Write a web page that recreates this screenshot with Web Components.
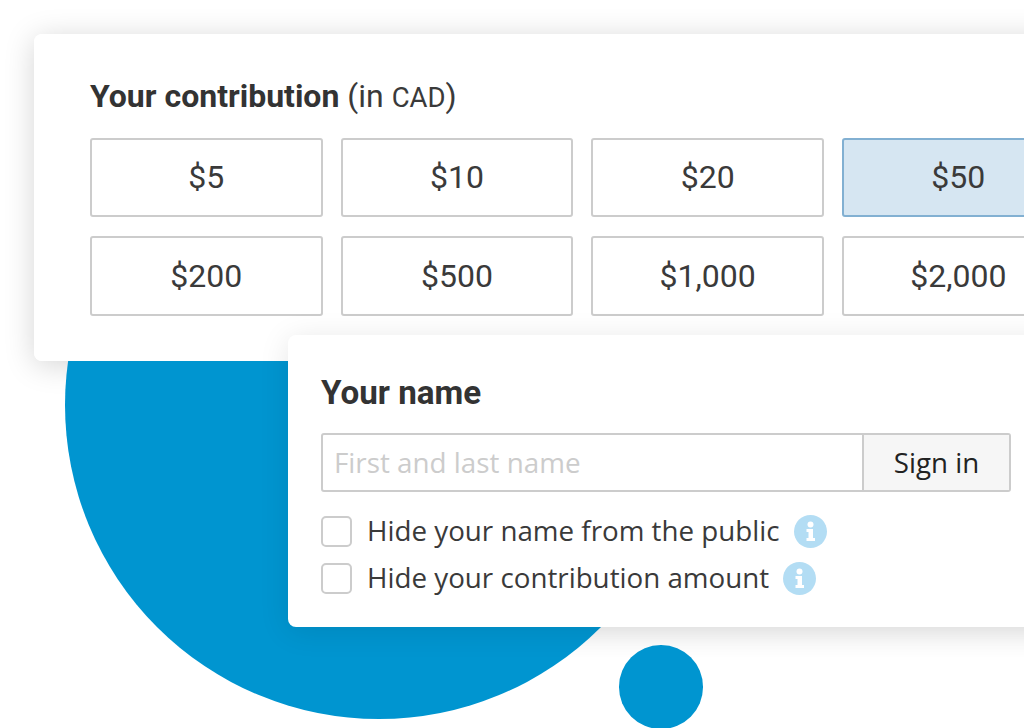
<!DOCTYPE html>
<html lang="en">
<head>
<meta charset="utf-8">
<title>Your contribution</title>
<style>
    html, body { margin: 0; padding: 0; background: #fff; overflow: hidden; }
</style>
</head>
<body>
<contribution-stage>
    <amount-card>
        <amount-option>$5</amount-option>
        <amount-option>$10</amount-option>
        <amount-option>$20</amount-option>
        <amount-option selected>$50</amount-option>
        <amount-option>$200</amount-option>
        <amount-option>$500</amount-option>
        <amount-option>$1,000</amount-option>
        <amount-option>$2,000</amount-option>
    </amount-card>
    <name-card>
        <check-row>Hide your name from the public</check-row>
        <check-row>Hide your contribution amount</check-row>
    </name-card>
</contribution-stage>

<script>
class ContributionStage extends HTMLElement {
    connectedCallback() {
        this.attachShadow({ mode: 'open' });
        this.shadowRoot.innerHTML = `
            <style>
                :host {
                    display: block;
                    position: relative;
                    isolation: isolate;
                    width: 1024px;
                    height: 728px;
                    overflow: hidden;
                    padding: 34px 0 0 34px;
                    box-sizing: border-box;
                }
                .dot {
                    position: absolute;
                    border-radius: 50%;
                    background: #0095d0;
                }
                /* the circles sit above the soft shadows, under the cards */
                .big { left: 65px; top: 91px; width: 628px; height: 628px; z-index: -1; }
                .small { left: 619px; top: 645px; width: 83.500px; height: 83.500px; z-index: 1; }
            </style>
            <div class="dot big"></div>
            <div class="dot small"></div>
            <slot></slot>
        `;
    }
}

class AmountCard extends HTMLElement {
    connectedCallback() {
        this.attachShadow({ mode: 'open' });
        this.shadowRoot.innerHTML = `
            <style>
                :host {
                    display: block;
                    position: relative;
                    width: 1100px;
                    height: 327px;
                    box-sizing: border-box;
                    padding: 42px 0 0 56px;
                    background: #fff;
                    border-radius: 8px;
                    color: #3a3a3a;
                    font-family: Roboto, sans-serif;
                }
                .shade {
                    position: absolute;
                    inset: 0;
                    z-index: -2;
                    border-radius: 8px;
                    box-shadow: 0 4px 30px rgba(0, 0, 0, 0.17);
                }
                h2 {
                    margin: 0 0 21.500px;
                    font-size: 32px;
                    line-height: 41px;
                    height: 40px;
                    font-weight: 400;
                }
                b { font-weight: 700; color: #333; }
                .cad { font-size: 27.500px; }
                .grid {
                    display: grid;
                    grid-template-columns: repeat(4, 232.670px);
                    grid-auto-rows: 79.500px;
                    column-gap: 18px;
                    row-gap: 19px;
                }
            </style>
            <div class="shade"></div>
            <h2><b>Your contribution</b> (in <span class="cad">CAD</span>)</h2>
            <div class="grid"><slot></slot></div>
        `;
    }
}

class AmountOption extends HTMLElement {
    connectedCallback() {
        this.attachShadow({ mode: 'open' });
        this.shadowRoot.innerHTML = `
            <style>
                :host {
                    display: flex;
                    align-items: center;
                    justify-content: center;
                    box-sizing: border-box;
                    border: 2px solid #ccc;
                    border-radius: 3px;
                    background: #fff;
                    font-size: 32px;
                    color: #3a3a3a;
                }
                :host([selected]) {
                    background: #d6e6f2;
                    border-color: #82b0d2;
                }
            </style>
            <slot></slot>
        `;
    }
}

class NameCard extends HTMLElement {
    connectedCallback() {
        this.attachShadow({ mode: 'open' });
        this.shadowRoot.innerHTML = `
            <style>
                :host {
                    display: block;
                    position: relative;
                    width: 800px;
                    height: 292px;
                    box-sizing: border-box;
                    margin: -26px 0 0 254px;
                    padding: 37px 0 0 33px;
                    background: #fff;
                    border-radius: 8px;
                    box-shadow: 0 4px 30px rgba(0, 0, 0, 0.1);
                    color: #333;
                    font-family: "Open Sans", sans-serif;
                }
                .shade {
                    position: absolute;
                    inset: 0;
                    z-index: -2;
                    border-radius: 8px;
                    box-shadow: 0 4px 30px rgba(0, 0, 0, 0.08);
                }
                h2 {
                    margin: 0 0 19px;
                    font: 700 33.200px/42px Roboto, sans-serif;
                }
                .group {
                    display: flex;
                    width: 690px;
                    height: 59px;
                    box-sizing: border-box;
                    margin-bottom: 24px;
                    border: 2px solid #ccc;
                    border-radius: 3px;
                }
                .field {
                    flex: 1;
                    display: flex;
                    align-items: center;
                    padding: 0 0 2px 11px;
                    font-size: 27.800px;
                    color: #ccc;
                }
                .btn {
                    width: 147px;
                    border: 0;
                    border-left: 2px solid #ccc;
                    background: #f6f6f6;
                    font: 27.700px "Open Sans", sans-serif;
                    color: #222;
                    padding: 0 0 2px;
                }
                .checks {
                    display: flex;
                    flex-direction: column;
                    gap: 15px;
                }
            </style>
            <div class="shade"></div>
            <h2>Your name</h2>
            <div class="group">
                <div class="field">First and last name</div>
                <button class="btn">Sign in</button>
            </div>
            <div class="checks"><slot></slot></div>
        `;
    }
}

class CheckRow extends HTMLElement {
    connectedCallback() {
        this.attachShadow({ mode: 'open' });
        this.shadowRoot.innerHTML = `
            <style>
                :host {
                    display: flex;
                    align-items: center;
                    height: 31.500px;
                    font-size: 27.750px;
                    white-space: nowrap;
                    color: #3a3a3a;
                }
                .box {
                    width: 31px;
                    height: 31px;
                    box-sizing: border-box;
                    margin-right: 15px;
                    border: 2px solid #ccc;
                    border-radius: 5px;
                    background: #fff;
                }
                .label { margin-top: -3px; }
                info-icon { margin-left: 14px; }
            </style>
            <div class="box"></div>
            <div class="label"><slot></slot></div>
            <info-icon></info-icon>
        `;
    }
}

class InfoIcon extends HTMLElement {
    connectedCallback() {
        this.attachShadow({ mode: 'open' });
        this.shadowRoot.innerHTML = `
            <style>
                :host { display: block; width: 33px; height: 33px; }
                svg { display: block; }
            </style>
            <svg width="33" height="33" viewBox="0 0 33 33">
                <circle cx="16.500" cy="16.500" r="16.500" fill="#b3ddf4"/>
                <circle cx="16.500" cy="9.500" r="3" fill="#fff"/>
                <path d="M12.500 14h6.500v9h2v3h-8.500v-3h2v-6h-2z" fill="#fff"/>
            </svg>
        `;
    }
}

customElements.define('contribution-stage', ContributionStage);
customElements.define('amount-card', AmountCard);
customElements.define('amount-option', AmountOption);
customElements.define('name-card', NameCard);
customElements.define('check-row', CheckRow);
customElements.define('info-icon', InfoIcon);
</script>
</body>
</html>
